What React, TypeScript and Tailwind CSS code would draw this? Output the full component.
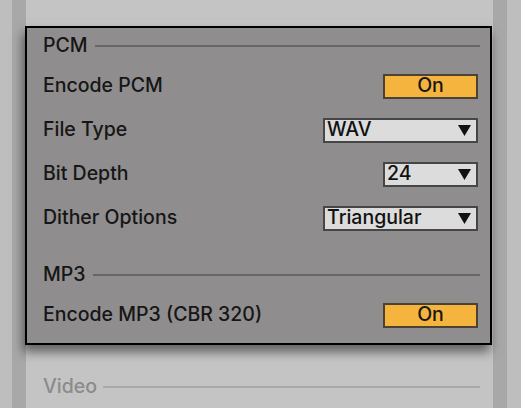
import React from "react";

const font = { fontFamily: "Inter, 'Open Sans', 'Liberation Sans', sans-serif" };

function Caret() {
  return (
    <svg width="13" height="11" viewBox="0 0 13 11" className="shrink-0">
      <path d="M0 0h13L6.5 11z" fill="#111" />
    </svg>
  );
}

function Header({ label, className = "" }: { label: string; className?: string }) {
  return (
    <div className={`flex items-center h-[36px] pr-[10px] ${className}`}>
      <span className="text-[19.5px] font-medium text-[#161616] leading-none">{label}</span>
      <div className="flex-1 ml-[7px] h-[2px] bg-[#676565]" />
    </div>
  );
}

function Toggle() {
  return (
    <div className="w-[95px] h-[25px] bg-[#f4b43d] border-2 border-[#4b4235] flex items-center justify-center text-[19.5px] font-medium text-[#161616] leading-none">
      On
    </div>
  );
}

function Select({ value, wide }: { value: string; wide?: boolean }) {
  return (
    <div
      className={`${wide ? "w-[155px]" : "w-[95px]"} h-[25px] bg-[#dcdcdc] border-2 border-[#464646] flex items-center justify-between pl-[2px] pr-[5px] text-[19.5px] font-medium text-[#111] leading-none`}
    >
      <span>{value}</span>
      <Caret />
    </div>
  );
}

function Row({ label, children }: { label: string; children: React.ReactNode }) {
  return (
    <div className="flex items-center justify-between h-[44px] pr-[12px]">
      <span className="text-[19.5px] font-medium text-[#161616] leading-none">{label}</span>
      {children}
    </div>
  );
}

export default function App() {
  return (
    <div style={font} className="w-[521px] h-[408px] flex bg-[#bdbdbd] overflow-hidden">
      <div className="w-[12px] bg-[#bebebe]" />
      <div className="w-[14px] bg-[#a8a8a8]" />
      <div className="relative flex-1 bg-[#c4c4c4] flex flex-col pt-[369px] pl-[17px] pr-[13px]">
        {/* popup over the panel */}
        <div className="absolute left-[-1px] top-[26px] w-[467px] bg-[#8f8d8d] border-2 border-black shadow-[-2px_7px_10px_rgba(0,0,0,0.5)] pl-[16px] pb-[6px]">
          <Header label="PCM" />
          <Row label="Encode PCM">
            <Toggle />
          </Row>
          <Row label="File Type">
            <Select value="WAV" wide />
          </Row>
          <Row label="Bit Depth">
            <Select value="24" />
          </Row>
          <Row label="Dither Options">
            <Select value="Triangular" wide />
          </Row>
          <Header label="MP3" className="mt-[17px]" />
          <Row label="Encode MP3 (CBR 320)">
            <Toggle />
          </Row>
        </div>
        <div className="flex items-center h-[36px]">
          <span className="text-[19.5px] font-medium text-[#8b8b8b] leading-none">Video</span>
          <div className="flex-1 ml-[6px] h-[2px] bg-[#a9a9a9]" />
        </div>
      </div>
      <div className="w-[14px] bg-[#a8a8a8]" />
      <div className="w-[14px] bg-[#bebebe]" />
    </div>
  );
}
